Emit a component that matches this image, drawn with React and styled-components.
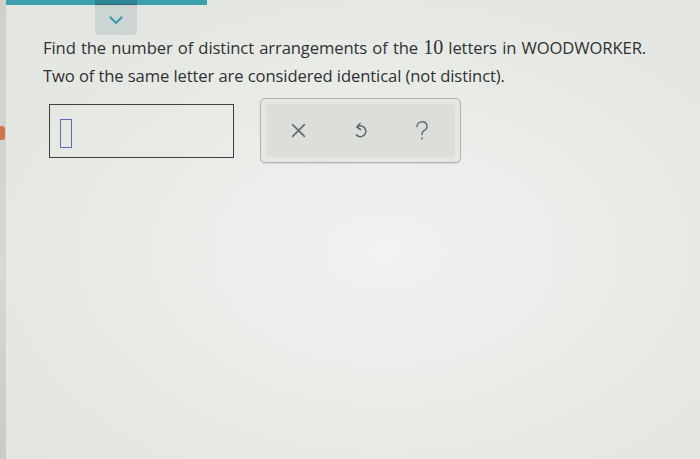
import React from "react";
import styled, { createGlobalStyle } from "styled-components";

const Global = createGlobalStyle`
  html, body { margin: 0; padding: 0; }
  body {
    width: 700px; height: 459px; overflow: hidden;
    font-family: "Open Sans", "Liberation Sans", sans-serif;
  }
`;

const Screen = styled.div`
  position: relative;
  width: 700px;
  height: 459px;
  background: radial-gradient(ellipse at 55% 55%, #f1f2f1 0%, #e9ebe7 45%, #e2e4df 100%);
  display: flex;
  overflow: hidden;
`;

const Bezel = styled.div`
  width: 6px;
  flex: none;
  background: linear-gradient(#cfd0cc, #d7d8d4 60%, #c9cac5);
  position: relative;
`;

const Mark = styled.div`
  position: absolute;
  left: 0;
  top: 126px;
  width: 5px;
  height: 14px;
  background: #d2744a;
  border-radius: 0 3px 3px 0;
`;

const Page = styled.div`
  flex: 1;
  display: flex;
  flex-direction: column;
`;

const TopBar = styled.div`
  height: 5px;
  width: 201px;
  background: #3c9fae;
  display: flex;
`;

const TopBarDark = styled.div`
  margin-left: 89px;
  width: 42px;
  height: 5px;
  background: #2f8795;
  border-bottom: 1px solid #2c6570;
  box-sizing: border-box;
`;

const Tab = styled.div`
  margin-left: 89px;
  width: 42px;
  height: 30px;
  background: #cdd6d5;
  border-radius: 0 0 4px 4px;
  display: flex;
  align-items: center;
  justify-content: center;
`;

const Question = styled.div`
  margin: -2px 0 0 37px;
  color: #2f3133;
  font-size: 16.6px;
  line-height: 28px;
  letter-spacing: -0.1px;
`;

const Line = styled.div`
  word-spacing: ${(p) => p.$ws || 0}px;
`;

const Num = styled.span`
  font-family: "Liberation Serif", serif;
  font-size: 20px;
`;

const AnswerRow = styled.div`
  margin: 8px 0 0 43px;
  display: flex;
  align-items: center;
  gap: 26px;
`;

const Input = styled.div`
  width: 185px;
  height: 54px;
  box-sizing: border-box;
  border: 1px solid #3d3f40;
  padding: 14px 0 0 10px;
  margin-top: 1px;
`;

const Caret = styled.div`
  width: 12px;
  height: 29px;
  box-sizing: border-box;
  border: 1px solid #6266c4;
`;

const Tools = styled.div`
  width: 201px;
  height: 65px;
  box-sizing: border-box;
  border: 1px solid #b1b3b0;
  border-radius: 5px;
  padding: 5px;
  background: #e5e7e3;
  box-shadow: 0 1px 1px rgba(0,0,0,0.08);
`;

const ToolsInner = styled.div`
  height: 100%;
  background: #dcdeda;
  border-radius: 3px;
  display: flex;
  align-items: center;
  padding: 0 0 0 18px;
  gap: 34px;
`;

const ToolBtn = styled.div`
  width: 28px;
  height: 28px;
  display: flex;
  align-items: center;
  justify-content: center;
  color: #5a6e75;
`;

export default function App() {
  return (
    <Screen>
      <Global />
      <Bezel><Mark /></Bezel>
      <Page>
        <TopBar><TopBarDark /></TopBar>
        <Tab>
          <svg width="14" height="9" viewBox="0 0 14 9">
            <path d="M1.5 1.5 L7 7 L12.5 1.5" fill="none" stroke="#3b9cab" strokeWidth="2.2" strokeLinecap="round" strokeLinejoin="round" />
          </svg>
        </Tab>
        <Question>
          <Line $ws={1}>
            Find the number of distinct arrangements of the <Num>10</Num> letters in WOODWORKER.
          </Line>
          <Line>Two of the same letter are considered identical (not distinct).</Line>
        </Question>
        <AnswerRow>
          <Input><Caret /></Input>
          <Tools>
            <ToolsInner>
              <ToolBtn>
                <svg width="15" height="15" viewBox="0 0 14 14">
                  <path d="M1.5 1.5 L12.5 12.5 M12.5 1.5 L1.5 12.5" stroke="currentColor" strokeWidth="1.5" strokeLinecap="round" />
                </svg>
              </ToolBtn>
              <ToolBtn>
                <svg width="15" height="18" viewBox="0 0 14 16">
                  <path d="M4 4.2 A5 5 0 1 1 3.2 11.6" fill="none" stroke="currentColor" strokeWidth="1.5" strokeLinecap="round" />
                  <path d="M6.5 1 L3.6 4.3 L7 6.6" fill="none" stroke="currentColor" strokeWidth="1.5" strokeLinecap="round" strokeLinejoin="round" />
                </svg>
              </ToolBtn>
              <ToolBtn>
                <svg width="14" height="22" viewBox="0 0 14 20">
                  <path d="M2 5.5 A5 4.6 0 1 1 8.6 9.8 C7.3 10.6 7 11.5 7 13.5" fill="none" stroke="currentColor" strokeWidth="1.5" strokeLinecap="round" />
                  <circle cx="7" cy="17.6" r="1" fill="currentColor" />
                </svg>
              </ToolBtn>
            </ToolsInner>
          </Tools>
        </AnswerRow>
      </Page>
    </Screen>
  );
}
